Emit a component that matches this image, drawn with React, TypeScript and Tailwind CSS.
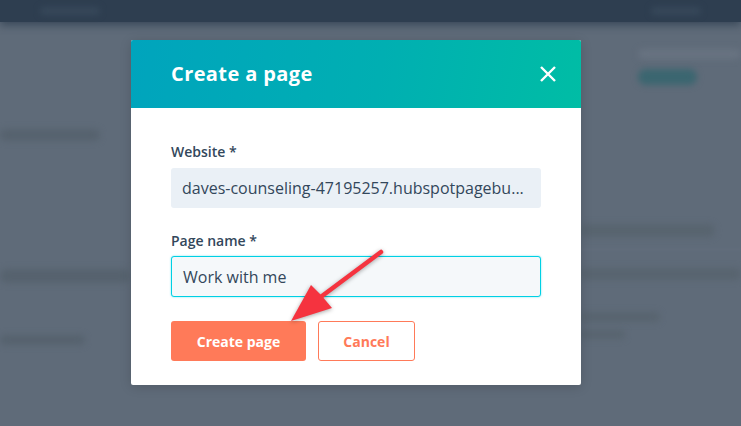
import React from "react";

function Blur({ className }: { className: string }) {
  return <div className={"rounded-full blur-[3px] " + className} />;
}

export default function App() {
  return (
    <div
      className="relative w-[741px] h-[426px] overflow-hidden bg-[#5f6b79]"
      style={{ fontFamily: '"Open Sans", "Noto Sans", sans-serif' }}
    >
      {/* Blurred background page */}
      <div className="flex flex-col h-full">
        <div className="h-[22px] bg-[#2e3e50] shadow-[0_3px_8px_rgba(46,62,80,0.8)] flex items-center justify-between px-[40px]">
          <Blur className="w-[60px] h-[8px] bg-[#37485a]" />
          <Blur className="w-[50px] h-[8px] bg-[#37485a]" />
        </div>
        <div className="flex flex-1 justify-between">
          <div className="w-[140px] flex flex-col">
            <Blur className="mt-[107px] w-[100px] h-[12px] bg-[#56626e]" />
            <Blur className="mt-[128px] w-[130px] h-[14px] bg-[#56626e]" />
            <Blur className="mt-[52px] w-[85px] h-[10px] bg-[#56626e]" />
          </div>
          <div className="w-[161px] flex flex-col items-start">
            <Blur className="mt-[27px] ml-[58px] w-[103px] h-[10px] bg-[#687381]" />
            <Blur className="mt-[10px] ml-[58px] w-[59px] h-[16px] bg-[#3b6670]" />
            <Blur className="mt-[139px] w-[135px] h-[13px] bg-[#58646f]" />
            <div className="mt-[12px] w-full h-[1px] bg-[#657080] blur-[1px]" />
            <Blur className="mt-[18px] w-[161px] h-[12px] bg-[#58646f]" />
            <Blur className="mt-[32px] w-[80px] h-[10px] bg-[#58646f]" />
            <Blur className="mt-[8px] w-[45px] h-[9px] bg-[#58646f]" />
          </div>
        </div>
      </div>

      {/* Modal */}
      <div className="absolute left-[131px] top-[40px] w-[450px] bg-white rounded-[2px] overflow-hidden shadow-[0_2px_12px_rgba(0,0,0,0.15)]">
        <div className="h-[68px] flex items-center justify-between pl-[40px] pr-[23px] bg-[linear-gradient(100deg,#00a4bd_0%,#00afb2_55%,#00bda5_100%)]">
          <h1 className="text-white text-[20px] font-bold tracking-[0.4px]">Create a page</h1>
          <svg width="18" height="18" viewBox="0 0 18 18" className="mr-[1px]">
            <path d="M2 2 L16 16 M16 2 L2 16" stroke="white" strokeWidth="2.4" strokeLinecap="butt" />
          </svg>
        </div>
        <div className="px-[40px] pt-[34px] pb-[24px]">
          <label className="block h-[20px] leading-[20px] text-[14px] font-semibold text-[#33475b]">Website *</label>
          <div className="mt-[6px] h-[40px] rounded-[3px] bg-[#eaf0f6] px-[11px] flex items-center text-[16px] text-[#33475b] whitespace-nowrap overflow-hidden">
            daves-counseling-47195257.hubspotpagebu...
          </div>
          <label className="block mt-[23px] h-[20px] leading-[20px] text-[14px] font-semibold text-[#33475b]">Page name *</label>
          <div className="mt-[5px] h-[41px] rounded-[3px] bg-[#f5f8fa] border-[1.5px] border-[#00d0e4] px-[11px] flex items-center text-[16px] text-[#33475b] shadow-[0_0_2px_rgba(0,208,228,0.6)]">
            Work with me
          </div>
          <div className="mt-[24px] flex gap-[12px]">
            <button className="w-[135px] h-[40px] rounded-[3px] bg-[#ff7a59] text-white text-[14px] font-bold">
              Create page
            </button>
            <button className="w-[97px] h-[40px] rounded-[3px] bg-white border border-[#ff7a59] text-[#ff7a59] text-[14px] font-bold">
              Cancel
            </button>
          </div>
        </div>
      </div>

      {/* Red annotation arrow */}
      <svg
        className="absolute left-0 top-0 pointer-events-none"
        width="741"
        height="426"
        viewBox="0 0 741 426"
        style={{ filter: "drop-shadow(0 1px 2px rgba(0,0,0,0.35))" }}
      >
        <line x1="381" y1="252" x2="318" y2="299" stroke="#f5333f" strokeWidth="4.5" strokeLinecap="round" />
        <polygon points="291,321 311,285 321,295 332,308" fill="#f5333f" />
      </svg>
    </div>
  );
}
